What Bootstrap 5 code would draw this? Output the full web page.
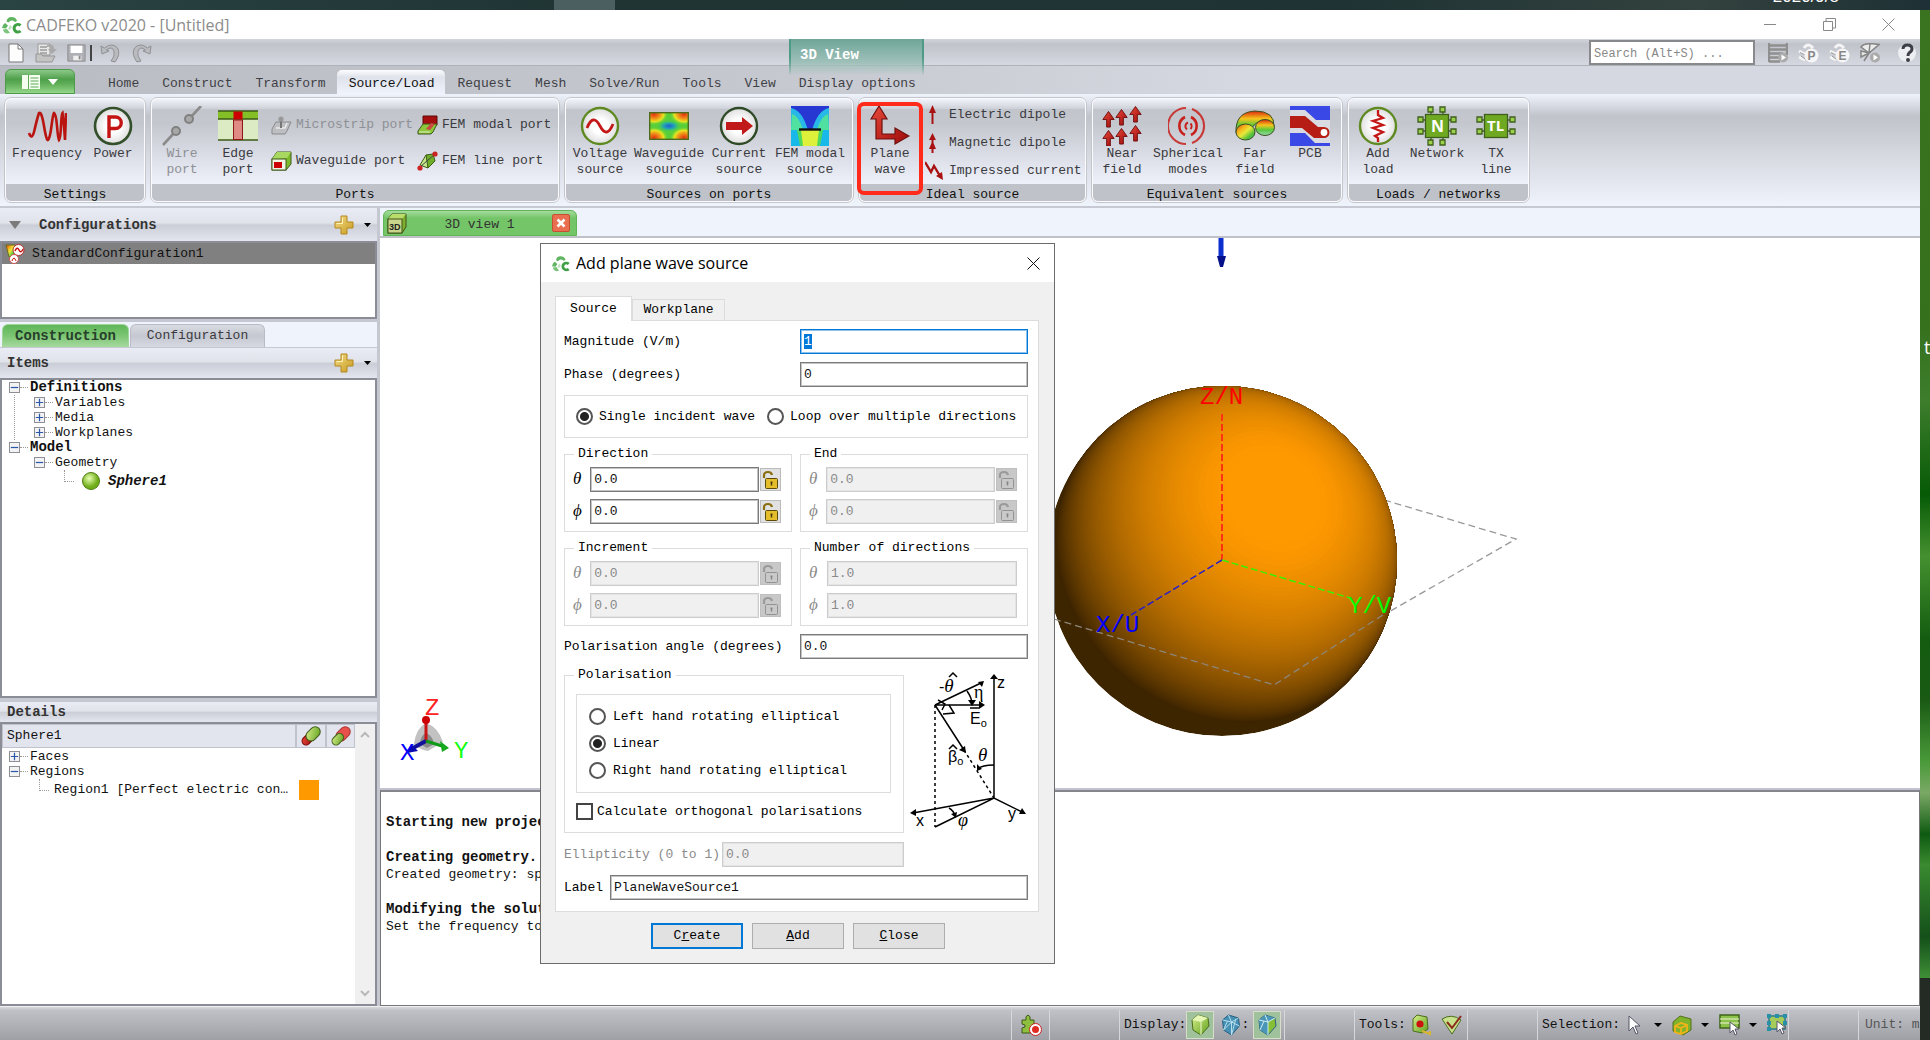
<!DOCTYPE html>
<html lang="en">
<head>
<meta charset="utf-8">
<meta name="viewport" content="width=device-width, initial-scale=1">
<title>CADFEKO v2020 - [Untitled]</title>
<link href="https://cdn.jsdelivr.net/npm/bootstrap@5.3.0/dist/css/bootstrap.min.css" rel="stylesheet">
<style>
:root{--ink:#3a3a40;--edge:#8a8d96;--pale:#eff3fc;--mid:#c0c3ca}
body{min-height:100vh;background:#2b5f1c;font-family:"Liberation Mono",monospace;font-size:13px;line-height:16px;color:#111;overflow:hidden}
svg{display:block;flex:none}
button{font-family:inherit;font-size:13px;line-height:16px;color:inherit;background:none;border:0;padding:0;border-radius:0}
.desk-top{height:10px;overflow:hidden;background:linear-gradient(90deg,#2a4343,#203434 30%,#1f3334 70%,#33423e 88%,#1e3035);color:#fff;font-family:"Liberation Sans",sans-serif;font-size:17px;padding-right:91px}
.desk-top .thumb{width:61px;margin-left:554px;background:#4c5f60}
.desk-top .date{line-height:16px;margin-top:-11px}
.desk-side{width:10px;color:#fff;overflow:hidden;padding:322px 0 0 4px;font-family:"Open Sans",sans-serif;font-size:18px;line-height:30px;background:linear-gradient(#3a7420,#35701c 30%,#3d7d2c 38%,#065a06 47%,#459030 53%,#145c10 61%,#1a5a14 67%,#4a9a3a 73%,#7aa865 76%,#0f5a12 80%,#3a8a30 83%,#14501a 90%,#3f8f36 94%,#232b24 94%)}
.ui-face{font-family:"Open Sans",sans-serif;font-size:16px}
.title-row{height:29px;background:#fff;color:#8c8c8c;padding:0 25px 0 2px}
.title-row .wctl{gap:46px}
.quick{height:27px;background:linear-gradient(#d2d5dc,#c0c3ca 20%,#d5d8e0);border-bottom:1px solid #afb2b9;padding:1px 4px 0 8px}
.quick .bar{width:2px;height:16px;background:#444}
.ctx{width:135px;height:36px;padding:7px 9px;background:linear-gradient(#6fa698,#9fc0ba 65%,rgba(195,200,206,0));border-left:2px solid #4d9a86;border-right:2px solid #4d9a86;border-image:linear-gradient(#4d9a86 50%,rgba(77,154,134,0)) 1;color:#fff;font-weight:bold;font-size:14px;line-height:18px;left:789px;top:0}
.search{width:166px;height:25px;border:2px solid #88898c;border-radius:0;font-size:12px;padding:2px 3px 0;background:#fff;color:#777}
.search::placeholder{color:#888}
.tab-row{height:28px;background:linear-gradient(90deg,#b9bcc2,#c5c8cf 40%,#d5d8e0 65%);padding-left:5px}
.app-btn{width:70px;height:25px;background:linear-gradient(#8cc98a,#4f9f4b 40%,#5fae57 60%,#94d68a);border:1px solid #4f9a4a;border-radius:6px 6px 0 0}
.rib-tab{height:24px;padding:3px 11px 0 12px;color:#3f4046}
.rib-tab.active{background:linear-gradient(#fdfdff,#dfe2ea 30%,#eff3fc);border-radius:5px 5px 0 0;color:#111}
.ribbon{height:114px;padding:3px 4px;gap:4px;background:linear-gradient(#eff3fc,#c0c3ca 20%,#d3d6dd 50%,#eff3fc);border-bottom:2px solid #c6c9d1}
.rgroup{border:2px solid #fbfbfe;outline:1px solid #c4c6cd;outline-offset:-1px;border-radius:7px;background:linear-gradient(#f2f4fb,#cdd0d8 10px,#c2c5cc 10px,#c4c7ce 25px,#eff2fb 86px)}
.rgroup .rbody{height:85px}
.rgroup .rfoot{height:17px;line-height:21px;background:#bfc2c8;text-align:center;color:#111;border-radius:0 0 5px 5px}
.big{color:var(--ink);white-space:nowrap;padding-top:7px}
.big svg{width:40px;height:40px}
.sm-btn{color:var(--ink);gap:4px;height:28px;white-space:nowrap}
.lite{color:#8e9096}
.plane{outline:4px solid #ff2a1a;outline-offset:-1px;border-radius:4px;margin-top:6px;padding:1px 0 14px;z-index:1}
.left-dock{width:380px;background:#c5c8d1;border-right:3px solid #c5c8d1}
.dock-head{height:31px;background:linear-gradient(#e9ecf5,#e0e3ea 45%,#cbced6 52%,#e3e6ee);color:#333;font-weight:bold;font-size:14px}
.pane{background:#fff;border:2px solid var(--edge)}
.cfg-row{height:21px;background:#808080;color:#111;padding-left:3px;gap:7px}
.dk-tab{height:23px;border:1px solid #b9bcc6;border-bottom:0;border-radius:6px 6px 0 0;background:linear-gradient(#d9dbe2,#c5c8d0 50%,#d6d9e1);color:#3a3a40}
.dk-tab.on{background:linear-gradient(#5fb658,#7cc673 50%,#a6d9a0);border-color:#9fd49a;font-weight:bold;color:#26402a;font-size:14px}
.tree,.tree ul{list-style:none;margin:0;padding:0}
.tree .node{height:15px;line-height:15px;white-space:nowrap}
.tree .tg{width:11px;height:11px;border:1px solid #8d8f94;background:#f3f3f3;color:#2b57a8;padding:0}
.tree .tg svg{width:9px;height:9px}
.stub{width:8px;border-top:1px dotted #999;margin-right:2px}
.kids{margin-left:5px !important;border-left:1px dotted #999}
.elbow{width:10px;height:12px;border-left:1px dotted #999;border-bottom:1px dotted #999;align-self:flex-start}
.cell{height:24px;background:#e2e4ee;border:1px solid #c1c3cc}
.sbar{width:20px;background:#f0f0f0;padding:7px 0}
.tab3d{width:194px;height:26px;background:linear-gradient(#a5dc9e,#74c468 30%);border:1px solid #62b556;border-radius:6px 6px 0 0;color:#333;padding:0 6px 0 3px}
.tab3d .shut{width:18px;height:18px;background:#ea6f50;border:1px solid #c94f33;border-radius:2px}
.log-pane{height:216px;background:#fff;border:1px solid #777;border-top:2px solid #85868c;padding:21px 5px}
.log-pane p{margin:0;height:17px;line-height:17px;white-space:pre}
.log-pane h6{margin:0;height:18px;font-size:14px;line-height:18px;font-weight:bold;white-space:pre}
.view-edge{height:2px;background:#c1c3d0}
.status{height:34px;background:linear-gradient(#d8dade,#bfc1c7 10%,#9fa0a6);border-top:1px solid #eee;color:#111}
.sec{border-left:1px solid #d6d7da;height:30px}
.sec.shut-r{border-right:1px solid #d6d7da}
.st-on{width:28px;height:28px;background:#9fc19c;border:1px solid #d9dcc8}
.dlg{left:540px;top:233px;width:515px;background:#f0f0f0;border:1px solid #6b6b6b;color:#000;z-index:5}
.dlg-title{height:38px;background:#fff;padding:0 14px 0 11px;gap:6px}
.dlg-body{padding:14px 15px 14px 14px}
.dtab{border:1px solid #dcdcdc;border-bottom:0;background:#f0f0f0;height:21px;width:93px}
.dtab.on{background:#fff;height:25px;width:77px;margin-bottom:-1px;z-index:1;position:relative}
.dpanel{background:#fff;border:1px solid #dcdcdc;padding:8px 10px 11px 8px}
.fk{height:25px;border:1px solid #7a7a7a;outline:1px solid #c4c4c4;outline-offset:-2px;border-radius:0;padding:0 3px;font-size:13px;line-height:16px;color:#111;background:#fff;min-width:0}
.fk:focus{box-shadow:none;border-color:#0078d7;outline:1px solid #8cc1ec;outline-offset:-2px;color:#111}
.fk:disabled{background:#f0f0f0;border-color:#ccc;outline-color:#e4e4e4;color:#8a8a8a}
.fk::selection{background:#0078d7;color:#fff}
.half{width:228px}
.boxed{border:1px solid #dcdcdc}
.grp{border:1px solid #dcdcdc;min-width:0;padding:5px 10px 7px 8px;margin:0}
.grp legend{float:none;width:auto;margin:0 0 0 1px;padding:0 4px;font-size:13px;line-height:16px}
.grp label.sym{width:18px;font-family:"Liberation Serif",serif;font-style:italic;font-size:17px;line-height:24px}
.lockb{width:22px;height:23px;margin:1px 0 1px 1px;background:#e1e1e1;border:1px solid #bbb}
.lockb:disabled{background:#c8c8c8;color:#8f8f8f;border-color:#bfbfbf}
.rb{appearance:none;width:17px;height:17px;border:2px solid #555;border-radius:50%;margin:0;background:#fff;flex:none}
.rb:checked{background:radial-gradient(#222 0 4px,#fff 5px)}
.cb{appearance:none;width:17px;height:17px;border:2px solid #444;margin:0;background:#fff;flex:none}
.dim{color:#8a8a8a}
.dbtn{width:92px;height:26px;background:#e1e1e1;border:1px solid #adadad}
.dbtn.prime{border:2px solid #0078d7}
.gap7{gap:7px}.gap8{gap:8px}
.viewport3d{background:#fff;min-height:0;overflow:hidden}
</style>
<script src="https://cdn.jsdelivr.net/npm/bootstrap@5.3.0/dist/js/bootstrap.bundle.min.js"></script>
</head>
<body class="d-flex flex-column vh-100">
<svg width="0" height="0" class="position-absolute" aria-hidden="true">
 <defs>
  <linearGradient id="gRed" x1="0" y1="0" x2="1" y2="1"><stop offset="0" stop-color="#e84a3a"/><stop offset="1" stop-color="#9c0a0a"/></linearGradient>
  <linearGradient id="gGrn" x1="0" y1="0" x2="1" y2="1"><stop offset="0" stop-color="#d8ef8c"/><stop offset="1" stop-color="#5fa01c"/></linearGradient>
  <linearGradient id="gGold" x1="0" y1="0" x2="1" y2="1"><stop offset="0" stop-color="#f3dc8a"/><stop offset="1" stop-color="#c79a1d"/></linearGradient>
  <radialGradient id="gDisc"><stop offset="0.4" stop-color="#fff"/><stop offset="1" stop-color="#dedede"/></radialGradient>
  <radialGradient id="gBall" cx=".4" cy=".35"><stop offset="0" stop-color="#e8ffb0"/><stop offset="1" stop-color="#6fae1a"/></radialGradient>
  <radialGradient id="gHot"><stop offset="0" stop-color="#e03010"/><stop offset=".4" stop-color="#f08a18"/><stop offset=".7" stop-color="#e8e420"/><stop offset="1" stop-color="#5fd63a" stop-opacity="0"/></radialGradient>
  <radialGradient id="gCold"><stop offset="0" stop-color="#1f5fd0"/><stop offset=".5" stop-color="#24a8b0"/><stop offset="1" stop-color="#4fd040" stop-opacity="0"/></radialGradient>
  <linearGradient id="gRain" x1="0" y1="0" x2="1" y2="1"><stop offset="0" stop-color="#d83a12"/><stop offset=".3" stop-color="#f4b41a"/><stop offset=".5" stop-color="#e8e83a"/><stop offset=".75" stop-color="#4fc03a"/><stop offset="1" stop-color="#58b8a8"/></linearGradient>
  <linearGradient id="gLobe" x1="0" y1="0" x2="0" y2="1"><stop offset="0" stop-color="#d8260e"/><stop offset=".35" stop-color="#f6c51c"/><stop offset=".65" stop-color="#58c83a"/><stop offset="1" stop-color="#9ad8b0"/></linearGradient>
  <symbol id="logo" viewBox="0 0 20 18"><path d="M4.500 5.500Q5 1 9.500 1T15 5L13 6Q9.500 3 6.500 6.500Z" fill="#5fb561"/><path d="M3 7l3 2.500L4 12.500L0 12Q1 8 3 7Z" fill="#5fb561"/><path d="M1 13.500l4-.500 3 4-3 .500Q1.500 17 1 13.500Z" fill="#7cc47c"/><path d="M8 9l2 2-2 3-2-1z" fill="#bfe2bf"/><path d="M18.500 9.500A3.800 3.800 0 1 0 18.500 15" fill="none" stroke="#3fa045" stroke-width="3"/></symbol>
  <symbol id="plus" viewBox="0 0 20 20"><path d="M7 1h6v6h6v6h-6v6H7v-6H1V7h6z" fill="url(#gGold)" stroke="#b5891c"/><path d="M8.500 2.500v6h-6" stroke="#fff3b8" fill="none"/></symbol>
  <symbol id="lock" viewBox="0 0 18 20"><path d="M3 8V5.500Q3 2 7 2Q10.500 2 11 5" fill="none" stroke="#8a6d10" stroke-width="2.200"/><rect x="4.500" y="8.500" width="12" height="10" rx="1" fill="#e3bd2c" stroke="#5d4a0b"/><path d="M10.500 11.500v4M9.500 12.500h2" stroke="#4a3908" stroke-width="1.400"/></symbol>
  <symbol id="lockoff" viewBox="0 0 18 20"><path d="M3 8V5.500Q3 2 7 2Q10.500 2 11 5" fill="none" stroke="#9a9a9a" stroke-width="2.200"/><rect x="4.500" y="8.500" width="12" height="10" rx="1" fill="#c9c9c9" stroke="#929292"/><path d="M10.500 11.500v4M9.500 12.500h2" stroke="#858585" stroke-width="1.400"/></symbol>
  <symbol id="upar" viewBox="0 0 13 18"><path d="M6.500 .500L12.500 9H8.500v8h-4V9H.500z" fill="url(#gRed)" stroke="#701010"/></symbol>
  <symbol id="cubeg" viewBox="0 0 20 22"><path d="M2 6L8 1L18 4L19 12L11 21L3 16Z" fill="url(#gGrn)" stroke="#4c6d1d"/><path d="M2 6L8 1L18 4L11 8Z" fill="#e6f6b4"/><path d="M11 8L11 21" fill="none" stroke="#f1fad2"/></symbol>
  <symbol id="pin" viewBox="0 0 11 11"><path d="M1 5.500h9M5.500 1v9" stroke="#2b57a8" stroke-width="1.500"/></symbol>
  <symbol id="minus" viewBox="0 0 11 11"><path d="M1 5.500h9" stroke="#2b57a8" stroke-width="1.500"/></symbol>
 </defs>
</svg>

<div class="desk-top d-flex flex-shrink-0 justify-content-between"><span class="thumb"></span><span class="date">2020/9/8</span></div>
<div class="d-flex flex-grow-1" style="min-height:0">
<main class="d-flex flex-column flex-grow-1 position-relative" style="min-width:0">
 <header class="title-row d-flex align-items-center flex-shrink-0 ui-face">
  <svg width="20" height="18"><use href="#logo"/></svg><span class="ms-1">CADFEKO v2020 - [Untitled]</span>
  <div class="wctl d-flex ms-auto">
   <button aria-label="Minimise"><svg width="13" height="13"><path d="M0 6.500h12" stroke="#888"/></svg></button>
   <button aria-label="Restore"><svg width="13" height="13"><path d="M.500 3.500h9v9h-9zM3 3V.500h9.500V10H10" fill="none" stroke="#888"/></svg></button>
   <button aria-label="Close window"><svg width="13" height="13"><path d="M.500.500l12 12m0-12l-12 12" stroke="#888"/></svg></button>
  </div>
 </header>

 <div class="position-relative flex-shrink-0">
 <div class="quick d-flex align-items-center">
  <button aria-label="New"><svg width="16" height="20"><path d="M1 1h9l5 5v13H1z" fill="#fdfdfd" stroke="#777"/><path d="M10 1v5h5" fill="none" stroke="#777"/></svg></button>
  <button style="margin-left:10px" aria-label="Open"><svg width="24" height="20" viewBox="0 0 24 20"><path d="M4 1h12v11H4z" fill="#e8e8e8" stroke="#999"/><path d="M6 4h7M6 7h7M6 10h7" stroke="#999" stroke-width="1.500"/><path d="M13 2q7-2 7 4h3l-5 5-4-5h3q0-3-4-2z" fill="#a9a9a9"/><path d="M2 11h5l2 2h12l-3 6H2z" fill="#c4c4c4" stroke="#959595"/></svg></button>
  <button class="ms-2" aria-label="Save"><svg width="20" height="20" viewBox="0 0 22 20"><path d="M2 1h19v18H2z" fill="#aeb0b5" stroke="#8b8b8b"/><path d="M5 2h13v8H5z" fill="#fff"/><path d="M8 13h9v5H8z" fill="#eee"/><path d="M14 13h2v4h-2z" fill="#888"/></svg></button>
  <span class="bar ms-1"></span>
  <button class="ms-2" aria-label="Undo"><svg width="20" height="20" viewBox="0 0 20 20"><path d="M1 3l1 8 7-3-2.500-1Q12 2.500 14 8q1.500 5-3 10l4 1Q21 11 17.500 5 12-1 4.500 5z" fill="#b9bbbf" stroke="#8f9195"/></svg></button>
  <button class="ms-2 ps-1" aria-label="Redo"><svg width="20" height="20" viewBox="0 0 20 20"><path transform="translate(20)scale(-1 1)" d="M1 3l1 8 7-3-2.500-1Q12 2.500 14 8q1.500 5-3 10l4 1Q21 11 17.500 5 12-1 4.500 5z" fill="#b9bbbf" stroke="#8f9195"/></svg></button>
  <input class="search ms-auto" type="text" placeholder="Search (Alt+S) ..." aria-label="Search">
  <div class="d-flex" style="margin-left:13px;gap:10px">
   <button aria-label="Run solver"><svg width="20" height="20" viewBox="0 0 20 20"><path d="M1 0v19M19 0v12M1 2.500h18M1 6.500h18M1 10.500h14M1 14.500h12M1 18.500h11" stroke="#8f8f8f" stroke-width="2.400"/><circle cx="15" cy="14.500" r="5" fill="#aaa"/><path d="M13.500 11.500l4.500 3-4.500 3z" fill="#fff"/></svg></button>
   <button aria-label="Postfeko"><svg width="21" height="20" viewBox="0 0 21 20"><path d="M6 5Q10-1 15 5M1 8l6 3M1 14l6 3" stroke="#f4f4f4" stroke-width="3" fill="none"/><path d="M2 9.500l5 2.500M3 13l4 3" stroke="#999"/><circle cx="13.500" cy="12.500" r="7" fill="#f6f6f6"/><text x="9.500" y="17" font-family="Liberation Sans,sans-serif" font-weight="bold" font-size="12" fill="#888">P</text></svg></button>
   <button aria-label="Editfeko"><svg width="21" height="20" viewBox="0 0 21 20"><path d="M6 5Q10-1 15 5M1 8l6 3M1 14l6 3" stroke="#f4f4f4" stroke-width="3" fill="none"/><path d="M2 9.500l5 2.500M3 13l4 3" stroke="#999"/><circle cx="13.500" cy="12.500" r="7" fill="#f6f6f6"/><text x="9.500" y="17" font-family="Liberation Sans,sans-serif" font-weight="bold" font-size="12" fill="#888">E</text></svg></button>
   <button aria-label="Optimise"><svg width="20" height="20" viewBox="0 0 20 20"><path d="M9 10L1 4Q3 1 10 .500L19 1.500ZM9 10L1 8v6zM9 10L4 18M10 .500L9 10M1 4l8 6" fill="#ececec" stroke="#858585" stroke-width="1.500"/><circle cx="15" cy="14.500" r="5" fill="#aaa"/><path d="M13.500 11.500l4.500 3-4.500 3z" fill="#fff"/></svg></button>
   <button class="ms-2" aria-label="Help"><svg width="18" height="20" viewBox="0 0 18 20"><circle cx="9" cy="10" r="9" fill="#eceef2"/><path d="M5 6Q5 2 9.500 2T14 6Q14 8 11 10Q10 11 10 13" fill="none" stroke="#3e4048" stroke-width="3"/><circle cx="10" cy="17" r="2" fill="#3e4048"/></svg></button>
  </div>
 </div>
 <nav class="tab-row d-flex align-items-end" aria-label="Ribbon tabs">
  <button class="app-btn d-flex align-items-center justify-content-center gap-2" aria-label="Application menu"><svg width="18" height="14"><path d="M0 0h18v14H0z" fill="#f4fff0"/><path d="M6.500 0v14M8.500 3h8M8.500 6h8M8.500 9h8M8.500 12h8" stroke="#5fa85a"/></svg><svg width="10" height="6"><path d="M0 0h10L5 6z" fill="#fff"/></svg></button>
  <button class="rib-tab" style="margin-left:21px">Home</button><button class="rib-tab">Construct</button><button class="rib-tab">Transform</button><button class="rib-tab active">Source/Load</button><button class="rib-tab">Request</button><button class="rib-tab">Mesh</button><button class="rib-tab">Solve/Run</button><button class="rib-tab">Tools</button><button class="rib-tab">View</button><button class="rib-tab">Display options</button>
 </nav>
 <div class="ctx position-absolute">3D View</div>
 </div>

 <section class="ribbon d-flex flex-shrink-0" aria-label="Source/Load">
  <div class="rgroup" style="width:142px">
   <div class="rbody d-flex align-items-start">
    <button class="big ms-1" style="width:74px"><svg class="mx-auto" viewBox="0 0 40 40"><path d="M2 27Q5 35 7.500 24T12 7Q14.500 5 17 20T21 34Q23 32 24.500 20T27 7Q29 8 30 20T32 34Q33.500 32 34 20T35.500 7L37 20L38 34L39 7" fill="none" stroke="#b9140f" stroke-width="2.600"/></svg>Frequency</button>
    <button class="big" style="width:58px"><svg class="mx-auto" viewBox="0 0 40 40"><circle cx="20" cy="20" r="18" fill="url(#gDisc)" stroke="#33502a" stroke-width="2.600"/><path d="M16 32V11h6.500a5.500 5.500 0 0 1 0 11.500H16" fill="none" stroke="#c41414" stroke-width="3.400"/></svg>Power</button>
   </div><div class="rfoot">Settings</div>
  </div>
  <div class="rgroup" style="width:410px">
   <div class="rbody d-flex align-items-start">
    <button class="big lite" style="width:60px"><svg class="mx-auto" viewBox="0 0 40 40"><path d="M1 39L13 26M28 12L39 0" stroke="#8b8b8b" stroke-width="2.600"/><circle cx="14" cy="25" r="4" fill="#a8a8a8" stroke="#808080" stroke-width="2"/><circle cx="27" cy="13" r="4" fill="#a8a8a8" stroke="#808080" stroke-width="2"/></svg>Wire<br>port</button>
    <button class="big" style="width:52px"><svg class="mx-auto" viewBox="0 0 40 40"><rect x="0" y="5" width="40" height="29" fill="#dcebc4"/><rect x="0" y="5" width="40" height="8" fill="#84bf28"/><path d="M0 5h40M0 13h40M0 34h40" stroke="#3d5a18" stroke-width="1.400"/><rect x="15.500" y="5.500" width="9" height="8" fill="#c00"/><rect x="15.500" y="14" width="9" height="19.500" fill="#e08a86" stroke="#8d1717"/></svg>Edge<br>port</button>
    <div class="d-flex flex-column gap8" style="padding:12px 0 0 7px;width:153px">
     <button class="sm-btn lite d-flex align-items-center"><svg width="21" height="20" viewBox="0 0 21 20"><path d="M1 14l4-7h15l-4 9-2 3H1z" fill="#bcbec2" stroke="#8b8b8b"/><path d="M5 13h9l2-5" fill="none" stroke="#ececec" stroke-width="1.500"/><path d="M10 13V5" stroke="#777" stroke-width="2"/><circle cx="10" cy="4" r="2.600" fill="#999"/></svg>Microstrip port</button>
     <button class="sm-btn d-flex align-items-center"><svg width="21" height="20" viewBox="0 0 21 20"><path d="M1 8l5-7h14v12l-5 6H1z" fill="#7cba2c" stroke="#3e5a18"/><path d="M1 8l5-7h14l-4 6z" fill="#a8d860"/><rect x="1" y="8" width="14" height="11" fill="#f2f5e6" stroke="#3e5a18"/><rect x="3" y="11" width="8" height="6" fill="#c00"/></svg>Waveguide port</button>
    </div>
    <div class="d-flex flex-column gap8" style="padding-top:12px">
     <button class="sm-btn d-flex align-items-center"><svg width="21" height="20" viewBox="0 0 21 20"><path d="M6 1h14v9H6z" fill="#a40e0e" stroke="#5f0808"/><path d="M1 16l5-7h14l-4 8-2 2H1z" fill="#8cc63a" stroke="#3e5a18"/><path d="M9 14l5-6 4 1-5 6z" fill="#c94a40"/><path d="M2 17h11" stroke="#e8f3c8"/></svg>FEM modal port</button>
     <button class="sm-btn d-flex align-items-center"><svg width="21" height="20" viewBox="0 0 21 20"><path d="M3 14L9 4l4 3-2 10z" fill="#c4e88a" stroke="#3e5a18"/><path d="M9 4l7-1 2 7-7 7z" fill="#6fae28" stroke="#3e5a18"/><path d="M3 16L18 3" stroke="#444"/><circle cx="3" cy="17" r="2.600" fill="#c22"/><circle cx="18" cy="3" r="2.600" fill="#c22"/></svg>FEM line port</button>
    </div>
   </div><div class="rfoot">Ports</div>
  </div>
  <div class="rgroup" style="width:290px">
   <div class="rbody d-flex align-items-start">
    <button class="big" style="width:68px"><svg class="mx-auto" viewBox="0 0 40 40"><circle cx="20" cy="20" r="18" fill="url(#gDisc)" stroke="#5f8a22" stroke-width="2.400"/><path d="M7 22Q13 7 20 20T33 18" fill="none" stroke="#c41818" stroke-width="2.800"/></svg>Voltage<br>source</button>
    <button class="big" style="width:70px"><svg class="mx-auto" viewBox="0 6 40 28" style="height:28px;margin:6px 0"><rect width="40" height="40" fill="#58cf3a"/><ellipse cx="5" cy="8" rx="14" ry="11" fill="url(#gHot)"/><ellipse cx="35" cy="8" rx="14" ry="11" fill="url(#gHot)"/><ellipse cx="5" cy="32" rx="14" ry="11" fill="url(#gHot)"/><ellipse cx="35" cy="32" rx="14" ry="11" fill="url(#gHot)"/><ellipse cx="20" cy="20" rx="12" ry="6" fill="url(#gCold)"/><rect x=".700" y="6.700" width="38.600" height="26.600" fill="none" stroke="#4e6b1c" stroke-width="1.400"/></svg>Waveguide<br>source</button>
    <button class="big" style="width:70px"><svg class="mx-auto" viewBox="0 0 40 40"><circle cx="20" cy="20" r="18" fill="url(#gDisc)" stroke="#2f4a26" stroke-width="2.400"/><path d="M7 16h16v-5l11 9-11 9v-5H7z" fill="#c11a1a"/></svg>Current<br>source</button>
    <button class="big" style="width:72px"><svg class="mx-auto" viewBox="0 0 40 40"><rect x="1" width="38" height="40" fill="#2637d2"/><path d="M1 2Q12 4 18 24H1zM39 2Q28 4 22 24h17z" fill="#28b8e8"/><path d="M2 8Q9 10 13 24H1zM38 8Q31 10 27 24h12z" fill="#50e0a0"/><path d="M1 24h38v16H1z" fill="#18b8e8"/><path d="M7 24h26l-3 16H10z" fill="#4fd860"/><path d="M11 24h18l-2 16H13z" fill="#dff03a"/><path d="M9 23.500h22" stroke="#111" stroke-width="2.400"/></svg>FEM modal<br>source</button>
   </div><div class="rfoot">Sources on ports</div>
  </div>
  <div class="rgroup" style="width:229px">
   <div class="rbody d-flex align-items-start">
    <button class="big plane position-relative" style="width:60px"><svg class="mx-auto" viewBox="0 0 40 40"><path d="M9 0l8 13h-5v15h13v-6l14 8-14 8v-5H6V13H1z" fill="url(#gRed)" stroke="#6e1010" stroke-width="1.200"/></svg>Plane<br>wave</button>
    <div class="d-flex flex-column" style="padding:2px 0 0 5px">
     <button class="sm-btn d-flex align-items-center"><svg width="20" height="20" viewBox="0 0 20 20"><path d="M7.500 0L11 8H8.500v11h-2V8H4z" fill="#a81212"/></svg>Electric dipole</button>
     <button class="sm-btn d-flex align-items-center"><svg width="20" height="20" viewBox="0 0 20 20"><path d="M7.500 0L11 7H8.500v3L11 16H8.500v4h-2v-4H4l2.500-6V7H4z" fill="#a81212"/></svg>Magnetic dipole</button>
     <button class="sm-btn d-flex align-items-center"><svg width="20" height="20" viewBox="0 0 20 20"><path d="M0 1l6 10 3-6 6 10" fill="none" stroke="#a81212" stroke-width="2.400"/><path d="M18 19l-1-8-6 4z" fill="#a81212"/></svg>Impressed current</button>
    </div>
   </div><div class="rfoot">Ideal source</div>
  </div>
  <div class="rgroup" style="width:252px">
   <div class="rbody d-flex align-items-start">
    <button class="big" style="width:58px"><svg class="mx-auto" viewBox="0 0 40 40"><g><use href="#upar" x="0" y="5" width="13" height="17"/><use href="#upar" x="13" y="3" width="13" height="17"/><use href="#upar" x="27" y="0" width="13" height="17"/><use href="#upar" x="0" y="24" width="13" height="17"/><use href="#upar" x="13" y="22" width="13" height="17"/><use href="#upar" x="27" y="19" width="13" height="17"/></g></svg>Near<br>field</button>
    <button class="big" style="width:74px"><svg class="mx-auto" viewBox="0 0 40 40"><g fill="none" stroke="#c8201c"><path d="M18 2A18 18 0 0 0 18 38" stroke-width="2" opacity=".85"/><path d="M24 3A18 18 0 0 1 24 37" stroke-width="2" opacity=".85"/><path d="M17 11A10 10 0 0 0 17 29M23 11A10 10 0 0 1 23 29" stroke-width="2.600"/><path d="M20 16.500A4 4 0 0 0 19 23.500M22.500 17.500A4 4 0 0 1 22.500 23" stroke-width="2"/></g></svg>Spherical<br>modes</button>
    <button class="big" style="width:60px"><svg class="mx-auto" viewBox="0 0 40 40"><path d="M1 27Q0 6 20 5Q40 5 39 21L28 16Q21 15 17 22Z" fill="url(#gLobe)" stroke="#3c4f22"/><ellipse cx="10.500" cy="26" rx="9.500" ry="8" fill="url(#gRain)" stroke="#3c4f22"/><ellipse cx="30" cy="21.500" rx="9.500" ry="8" fill="url(#gLobe)" stroke="#3c4f22"/></svg>Far<br>field</button>
    <button class="big" style="width:50px"><svg class="mx-auto" viewBox="0 0 40 40"><path d="M0 0h40v40H0z" fill="#d9dae2"/><path d="M0 0h40v14H26L15 4H0zM0 27h15l10 10h15v3H0z" fill="#3a48e6"/><path d="M0 10h15l13 11h6a5.500 5.500 0 0 1 0 11H24L12 22H0z" fill="#b51d15"/><circle cx="34" cy="26.500" r="3.400" fill="#fff"/></svg>PCB</button>
   </div><div class="rfoot">Equivalent sources</div>
  </div>
  <div class="rgroup" style="width:183px">
   <div class="rbody d-flex align-items-start">
    <button class="big" style="width:58px"><svg class="mx-auto" viewBox="0 0 40 40"><circle cx="20" cy="20" r="18" fill="url(#gDisc)" stroke="#5f8a22" stroke-width="2.400"/><path d="M20 4v5l5 3-10 3 10 4-10 3 10 4-8 4 3 2v4" fill="none" stroke="#c41818" stroke-width="2.300"/></svg>Add<br>load</button>
    <button class="big" style="width:60px"><svg class="mx-auto" viewBox="0 0 40 40"><g fill="#9ad04a" stroke="#3f5f1d" stroke-width="1.300"><path d="M14 6v4M26 6v4M14 30v5M26 30v5M5 14h4M5 25h4M31 14h4M31 25h4"/><path d="M11 1h5v5h-5zM23 1h5v5h-5zM11 34h5v5h-5zM23 34h5v5h-5zM1 11h5v5H1zM1 23h5v5H1zM34 11h5v5h-5zM34 23h5v5h-5z"/><rect x="8.500" y="8.500" width="23" height="23" fill="#6fa821"/></g><text x="14" y="26" font-family="Open Sans,sans-serif" font-weight="bold" font-size="16" fill="#fff">N</text></svg>Network</button>
    <button class="big" style="width:58px"><svg class="mx-auto" viewBox="0 0 40 40"><g fill="#9ad04a" stroke="#3f5f1d" stroke-width="1.300"><path d="M5 14h4M5 25h4M31 14h4M31 25h4"/><path d="M1 11h5v5H1zM1 23h5v5H1zM34 11h5v5h-5zM34 23h5v5h-5z"/><rect x="8.500" y="8.500" width="23" height="23" fill="#6fa821"/></g><text x="11" y="25" font-family="Open Sans,sans-serif" font-weight="bold" font-size="15" fill="#fff">TL</text></svg>TX<br>line</button>
   </div><div class="rfoot">Loads / networks</div>
  </div>
 </section>

 <div class="d-flex flex-grow-1" style="min-height:0">
  <aside class="left-dock d-flex flex-column flex-shrink-0">
   <div class="dock-head d-flex align-items-center" style="height:33px;padding:0 6px 0 9px"><svg width="12" height="8"><path d="M0 0h12L6 8z" fill="#7b7b7b"/></svg><span style="margin-left:18px">Configurations</span><button class="ms-auto" aria-label="Add configuration"><svg width="20" height="20"><use href="#plus"/></svg></button><button aria-label="Configuration menu" style="margin-left:10px"><svg width="7" height="4"><path d="M0 0h7L3.500 4z"/></svg></button></div>
   <div class="pane" style="height:78px"><div class="cfg-row d-flex align-items-center"><svg width="20" height="20" viewBox="0 0 20 20"><path d="M1 1h9v11l-6 1z" fill="url(#gRain)" stroke="#6a6a20"/><circle cx="13.500" cy="6" r="5.500" fill="#fff" stroke="#b33"/><path d="M10 7q2-5 4-1t4-1" fill="none" stroke="#c11" stroke-width="1.500"/><circle cx="9" cy="15" r="4.500" fill="#fff" stroke="#c55"/><path d="M7 17q2-6 4 0" fill="none" stroke="#c11"/></svg>StandardConfiguration1</div></div>
   <div class="d-flex align-items-end" style="height:28px;padding-left:2px;background:#eff3fc;border-top:3px solid #c5c8d1"><button class="dk-tab on" style="width:127px">Construction</button><button class="dk-tab" style="width:135px;margin-left:1px">Configuration</button></div>
   <div class="dock-head d-flex align-items-center" style="padding:0 6px 0 7px;border-top:1px solid #c5c8d1"><span>Items</span><button class="ms-auto" aria-label="Add item"><svg width="20" height="20"><use href="#plus"/></svg></button><button aria-label="Item menu" style="margin-left:10px"><svg width="7" height="4"><path d="M0 0h7L3.500 4z"/></svg></button></div>
   <div class="pane" style="height:320px;padding-left:7px">
    <ul class="tree">
     <li><div class="node d-flex align-items-center fw-bold" style="font-size:14px"><button class="tg" aria-label="Collapse"><svg><use href="#minus" width="9" height="9"/></svg></button><span class="stub"></span>Definitions</div>
      <ul class="kids" style="padding-left:19px">
       <li class="node d-flex align-items-center"><button class="tg" aria-label="Expand"><svg><use href="#pin" width="9" height="9"/></svg></button><span class="stub"></span>Variables</li>
       <li class="node d-flex align-items-center"><button class="tg" aria-label="Expand"><svg><use href="#pin" width="9" height="9"/></svg></button><span class="stub"></span>Media</li>
       <li class="node d-flex align-items-center"><button class="tg" aria-label="Expand"><svg><use href="#pin" width="9" height="9"/></svg></button><span class="stub"></span>Workplanes</li>
      </ul></li>
     <li><div class="node d-flex align-items-center fw-bold" style="font-size:14px"><button class="tg" aria-label="Collapse"><svg><use href="#minus" width="9" height="9"/></svg></button><span class="stub"></span>Model</div>
      <ul style="padding-left:25px">
       <li><div class="node d-flex align-items-center"><button class="tg" aria-label="Collapse"><svg><use href="#minus" width="9" height="9"/></svg></button><span class="stub"></span>Geometry</div>
        <ul style="padding-left:30px"><li class="d-flex align-items-center fw-bold fst-italic gap8" style="height:22px;font-size:14px"><span class="elbow"></span><svg width="18" height="18"><circle cx="9" cy="9" r="8.500" fill="url(#gBall)" stroke="#4f7d14"/></svg>Sphere1</li></ul></li>
      </ul></li>
    </ul>
   </div>
   <div class="dock-head d-flex align-items-center" style="height:24px;border-top:4px solid #c5c8d1;padding-left:7px">Details</div>
   <div class="pane d-flex flex-grow-1" style="min-height:0">
    <div class="flex-grow-1">
     <div class="d-flex"><div class="cell flex-grow-1 d-flex align-items-center ps-1">Sphere1</div>
      <button class="cell d-flex align-items-center justify-content-center" style="width:30px" aria-label="Show front"><svg width="22" height="22" viewBox="0 0 22 22"><g transform="rotate(-45 11 11)"><rect x="0" y="7" width="12" height="8" rx="4" fill="url(#gRed)" stroke="#700"/><rect x="6" y="6" width="16" height="10" rx="5" fill="url(#gGrn)" stroke="#3e5a18"/></g></svg></button>
      <button class="cell d-flex align-items-center justify-content-center" style="width:29px" aria-label="Show back"><svg width="22" height="22" viewBox="0 0 22 22"><g transform="rotate(-45 11 11)"><rect x="6" y="6" width="16" height="10" rx="5" fill="#e8504a" stroke="#a33"/><rect x="0" y="7" width="13" height="8" rx="4" fill="url(#gGrn)" stroke="#3e5a18"/></g></svg></button></div>
     <ul class="tree" style="padding:1px 0 0 7px">
      <li class="node d-flex align-items-center"><button class="tg" aria-label="Expand"><svg><use href="#pin" width="9" height="9"/></svg></button><span class="stub"></span>Faces</li>
      <li><div class="node d-flex align-items-center"><button class="tg" aria-label="Collapse"><svg><use href="#minus" width="9" height="9"/></svg></button><span class="stub"></span>Regions</div>
       <ul style="padding-left:30px"><li class="d-flex align-items-center" style="height:22px"><span class="elbow"></span><span style="margin-left:5px">Region1 [Perfect electric con…</span><span class="ms-auto" style="width:20px;height:20px;background:#ff9900;margin-right:36px"></span></li></ul></li>
     </ul>
    </div>
    <div class="sbar d-flex flex-column justify-content-between align-items-center"><svg width="10" height="7"><path d="M1 6l4-4 4 4" fill="none" stroke="#b9b9b9" stroke-width="2"/></svg><svg width="10" height="7"><path d="M1 1l4 4 4-4" fill="none" stroke="#b9b9b9" stroke-width="2"/></svg></div>
   </div>
  </aside>

  <section class="d-flex flex-column flex-grow-1" style="min-width:0">
   <div class="d-flex align-items-end flex-shrink-0" style="height:30px;background:#eff3fc;border-bottom:2px solid #c0c0c8;padding-left:3px"><div class="tab3d d-flex align-items-center justify-content-between"><svg width="20" height="21" viewBox="0 0 20 21"><path d="M1 6l4-5h14v13l-4 6H1z" fill="#7fae2e" stroke="#3e5218"/><path d="M1 6l4-5h14l-4 5z" fill="#b9db6a"/><rect x="1" y="6" width="14" height="14" fill="#c9d58a" stroke="#3e5218"/><text x="2" y="17" font-family="Liberation Sans,sans-serif" font-size="9" font-weight="bold" fill="#222">3D</text></svg><span class="pt-1">3D view 1</span><button class="shut" aria-label="Close view"><svg width="16" height="16"><path d="M4.500 4.500l7 7m0-7l-7 7" stroke="#fff" stroke-width="2.600"/></svg></button></div></div>
   <div class="viewport3d flex-grow-1">
    <svg width="1540" height="550" viewBox="380 238 1540 550" font-family="Liberation Mono,monospace" font-size="24">
     <defs><clipPath id="ball"><circle r="1"/></clipPath></defs>
     <path d="M1221 238v18" stroke="#0d2fd0" stroke-width="5"/><path d="M1217 256h9l-3 11h-3z" fill="#05108a"/>
     <path d="M1040 502L1054 506M1384 500L1516 539L1380 617" fill="none" stroke="#999" stroke-width="1.300" stroke-dasharray="7 4"/>
     <g transform="translate(1222 561) scale(175)"><g clip-path="url(#ball)"><circle r="1" fill="#3d2500"/><g id="shade" transform="rotate(-51)"></g></g></g>
     <path d="M1054 619L1274 685L1386 613" fill="none" stroke="#8d8678" stroke-width="1.300" stroke-dasharray="7 4"/>
     <path d="M1222 414V560" stroke="#ff3214" stroke-width="2" stroke-dasharray="7 3"/>
     <path d="M1222 560L1131 615" stroke="#2a20c8" stroke-width="1.500" stroke-dasharray="7 3"/>
     <path d="M1222 560L1350 598" stroke="#3cf000" stroke-width="1.500" stroke-dasharray="7 3"/>
     <text x="1200" y="404" fill="#f00">Z/N</text><text x="1096" y="632" fill="#00f">X/U</text><text x="1348" y="613" fill="#0f0">Y/V</text>
     <g><path d="M426 723Q438 727 443 742L428 751Q420 750 414 744Q416 728 426 723Z" fill="#c2c2c2"/><path d="M426 733Q433 736 434 744L427 748L420 744Q420 736 426 733" fill="#8a8a8a"/><path d="M426 741V722" stroke="#c81414" stroke-width="3"/><circle cx="426" cy="720" r="4" fill="#c00"/><path d="M426 741L413 748" stroke="#12129a" stroke-width="4"/><path d="M407 753l4-9 7 7z" fill="#0a0ab0"/><path d="M426 741L442 746" stroke="#109a18" stroke-width="3"/><path d="M440 741l9 7-7 4z" fill="#14a81c"/>
      <text x="425" y="715" fill="#f22">Z</text><text x="400" y="760" fill="#00f">X</text><text x="454" y="758" fill="#1f1">Y</text></g>
    </svg>
   </div>
   <div class="view-edge"></div>
   <div class="log-pane flex-shrink-0"><h6>Starting new project...</h6><p> </p><h6>Creating geometry...</h6><p>Created geometry: sphere</p><p> </p><h6>Modifying the solution...</h6><p>Set the frequency to</p></div>
  </section>
 </div>

 <footer class="status d-flex justify-content-end align-items-end flex-shrink-0">
  <div class="sec shut-r d-flex align-items-center justify-content-center" style="width:39px;margin-right:69px"><svg width="22" height="22" viewBox="0 0 22 22"><path d="M2 6h4q-1-4 2-5 3 1 2 5h4v4l3 1v3l-4-1v6H2v-5l3-1v-2L2 10z" fill="#8fbf3f" stroke="#3e5a18"/><circle cx="15.500" cy="15.500" r="6" fill="#fff" stroke="#c22"/><circle cx="15.500" cy="15.500" r="3.500" fill="#e02a22"/></svg></div>
  <div class="sec shut-r d-flex align-items-center" style="width:166px;margin-right:69px;padding-left:4px">Display:<button class="st-on d-flex align-items-center justify-content-center" aria-label="Solid"><svg width="20" height="22"><use href="#cubeg"/></svg></button><button style="margin-left:6px" aria-label="Mesh"><svg width="21" height="22" viewBox="0 0 20 22"><path d="M2 6L8 1L18 4L19 12L11 21L3 16Z" fill="#4590b4" stroke="#2b6080"/><path d="M2 6L11 8L18 4M11 8L11 21M8 1l3 7M3 16l8-8 8 4M7 7l-4 9M15 6l-4 15" fill="none" stroke="#b5deee"/></svg></button>:<button class="st-on ms-1 d-flex align-items-center justify-content-center" aria-label="Both"><svg width="20" height="22" viewBox="0 0 20 22"><path d="M2 6L8 1L18 4L19 12L11 21L3 16Z" fill="#86bf35" stroke="#2b6080"/><path d="M2 6L8 1L18 4L11 8L11 21L3 16Z" fill="#4a96b8"/><path d="M2 6L11 8L18 4M11 8L11 21M8 1l3 7M7 7l-4 9" fill="none" stroke="#d0ecf4"/></svg></button></div>
  <div class="sec shut-r d-flex align-items-center" style="width:114px;margin-right:69px;padding-left:4px">Tools:<button style="margin-left:5px" aria-label="Measure"><svg width="21" height="22" viewBox="0 0 21 22"><path d="M2 5l4-4 10 2 1 12-6 4-9-2z" fill="url(#gGrn)" stroke="#4c6d1d"/><circle cx="9" cy="10" r="3.600" fill="#c11"/><path d="M11 17l8 3v-3" fill="none" stroke="#d9b430" stroke-width="2"/></svg></button><button style="margin-left:9px" aria-label="Validate"><svg width="22" height="22" viewBox="0 0 22 22"><path d="M1 5Q11-1 20 6L11 20Z" fill="#c8e28c" stroke="#4c6d1d"/><path d="M6 8l5 6L20 2" fill="none" stroke="#8a2a1a" stroke-width="2"/></svg></button></div>
  <div class="sec shut-r d-flex align-items-center" style="width:252px;margin-right:69px;padding-left:4px"><span class="flex-shrink-0" style="width:86px">Selection:</span><button aria-label="Pointer"><svg width="13" height="20" viewBox="0 0 13 20"><path d="M1 1v15l4-4 3 7 2-1-3-7h5z" fill="#fff" stroke="#556"/></svg></button><svg width="8" height="4" style="margin:0 10px 0 13px"><path d="M0 0h8L4 4z"/></svg><button aria-label="Selection type"><svg width="20" height="22" viewBox="0 0 20 22"><path d="M1 8l7-6 11 3v11l-8 5-10-4z" fill="#7fb32a" stroke="#55701a"/><path d="M3 12l6-3 6 2v6l-6 3-6-2zM3 12l6 2 6-3M9 14v6" fill="none" stroke="#f0b418" stroke-width="1.800"/></svg></button><svg width="8" height="4" style="margin:0 10px 0 9px"><path d="M0 0h8L4 4z"/></svg><button aria-label="Selection list"><svg width="22" height="22" viewBox="0 0 22 22"><path d="M1 1h19v13H1z" fill="#8cc24a" stroke="#3e6418" stroke-width="1.500"/><path d="M1 5h19M1 9h19" stroke="#eef6d8"/><path d="M11 8v11l3-3 2 5 2-1-2-5h4z" fill="#fff" stroke="#556"/></svg></button><svg width="8" height="4" style="margin:0 10px 0 8px"><path d="M0 0h8L4 4z"/></svg><button aria-label="Box selection"><svg width="20" height="22" viewBox="0 0 20 22"><path d="M2 2h16v13H2z" fill="#a5cc5a" stroke="#2d7a90" stroke-width="1.500"/><path d="M0 0h4v4H0zM8 0h4v4H8zM16 0h4v4h-4zM0 7h4v4H0zM16 7h4v4h-4zM0 13h4v4H0z" fill="#2a90a8"/><path d="M10 7v11l3-3 2 5 2-1-2-5h4z" fill="#fff" stroke="#556"/></svg></button></div>
  <div class="sec d-flex align-items-center" style="width:62px;padding-left:6px;color:#555">Unit: m</div>
 </footer>

 <form class="dlg position-absolute" role="dialog" aria-label="Add plane wave source">
  <div class="dlg-title d-flex align-items-center ui-face"><svg width="18" height="17"><use href="#logo"/></svg><span>Add plane wave source</span><button type="button" class="ms-auto" aria-label="Close dialog"><svg width="13" height="13"><path d="M.500.500l12 12m0-12l-12 12" stroke="#111"/></svg></button></div>
  <div class="dlg-body">
   <div class="d-flex align-items-end" role="tablist"><button type="button" class="dtab on">Source</button><button type="button" class="dtab">Workplane</button></div>
   <div class="dpanel d-flex flex-column gap8">
    <div class="d-flex justify-content-between align-items-center"><label for="mag">Magnitude (V/m)</label><input id="mag" class="fk half" value="1"></div>
    <div class="d-flex justify-content-between align-items-center"><label for="pha">Phase (degrees)</label><input id="pha" class="fk half" value="0"></div>
    <div class="boxed d-flex align-items-center" style="height:43px;padding-left:11px"><input class="rb" type="radio" name="inc" id="r1" checked><label for="r1" style="margin-left:6px">Single incident wave</label><input class="rb" type="radio" name="inc" id="r2" style="margin-left:12px"><label for="r2" style="margin-left:6px">Loop over multiple directions</label></div>
    <div class="d-flex justify-content-between">
     <fieldset class="grp half"><legend>Direction</legend><div class="d-flex flex-column gap7">
      <div class="d-flex"><label class="sym" for="d1">θ</label><input id="d1" class="fk flex-grow-1" value="0.0"><button type="button" class="lockb" aria-label="Lock"><svg width="18" height="20"><use href="#lock"/></svg></button></div>
      <div class="d-flex"><label class="sym" for="d2">ϕ</label><input id="d2" class="fk flex-grow-1" value="0.0"><button type="button" class="lockb" aria-label="Lock"><svg width="18" height="20"><use href="#lock"/></svg></button></div></div></fieldset>
     <fieldset class="grp half"><legend>End</legend><div class="d-flex flex-column gap7">
      <div class="d-flex"><label class="sym dim" for="e1">θ</label><input id="e1" class="fk flex-grow-1" value="0.0" disabled><button type="button" class="lockb" disabled aria-label="Lock"><svg width="18" height="20"><use href="#lockoff"/></svg></button></div>
      <div class="d-flex"><label class="sym dim" for="e2">ϕ</label><input id="e2" class="fk flex-grow-1" value="0.0" disabled><button type="button" class="lockb" disabled aria-label="Lock"><svg width="18" height="20"><use href="#lockoff"/></svg></button></div></div></fieldset>
    </div>
    <div class="d-flex justify-content-between">
     <fieldset class="grp half"><legend>Increment</legend><div class="d-flex flex-column gap7">
      <div class="d-flex"><label class="sym dim" for="i1">θ</label><input id="i1" class="fk flex-grow-1" value="0.0" disabled><button type="button" class="lockb" disabled aria-label="Lock"><svg width="18" height="20"><use href="#lockoff"/></svg></button></div>
      <div class="d-flex"><label class="sym dim" for="i2">ϕ</label><input id="i2" class="fk flex-grow-1" value="0.0" disabled><button type="button" class="lockb" disabled aria-label="Lock"><svg width="18" height="20"><use href="#lockoff"/></svg></button></div></div></fieldset>
     <fieldset class="grp half"><legend>Number of directions</legend><div class="d-flex flex-column gap7">
      <div class="d-flex"><label class="sym dim" for="n1">θ</label><input id="n1" class="fk flex-grow-1" value="1.0" disabled></div>
      <div class="d-flex"><label class="sym dim" for="n2">ϕ</label><input id="n2" class="fk flex-grow-1" value="1.0" disabled></div></div></fieldset>
    </div>
    <div class="d-flex justify-content-between align-items-center"><label for="pol">Polarisation angle (degrees)</label><input id="pol" class="fk half" value="0.0"></div>
    <div class="d-flex justify-content-between align-items-start">
     <fieldset class="grp" style="width:340px;padding:11px 12px 12px 11px"><legend style="margin-left:-2px">Polarisation</legend>
      <div class="boxed d-flex flex-column" style="padding:13px 12px;gap:10px">
       <div class="d-flex align-items-center gap7"><input class="rb" type="radio" name="pl" id="p1"><label for="p1">Left hand rotating elliptical</label></div>
       <div class="d-flex align-items-center gap7"><input class="rb" type="radio" name="pl" id="p2" checked><label for="p2">Linear</label></div>
       <div class="d-flex align-items-center gap7"><input class="rb" type="radio" name="pl" id="p3"><label for="p3">Right hand rotating elliptical</label></div>
      </div>
      <div class="d-flex align-items-center gap-1" style="margin-top:10px"><input class="cb" type="checkbox" id="c1"><label for="c1">Calculate orthogonal polarisations</label></div>
     </fieldset>
     <svg width="120" height="167" viewBox="910 667 120 167" font-family="Liberation Sans,sans-serif" font-size="16" fill="none" stroke="#000" stroke-width="1.500">
      <path d="M996 677V798M937 705L983 683M937 705H984M937 705L966 750M996 798L915 813M937 827L996 798L1024 812"/>
      <path d="M966 750L996 798M937 705V827" stroke-dasharray="3 3"/>
      <path d="M969 691Q974 698 974 704M996 765Q984 765 980 769M951 808Q956 811 957 816M940 700l7 4-3 6M951 705l5 8-11 1M972 708h9M951 677l4-4 4 4M951 749l4-4 4 4"/>
      <g fill="#000" stroke="none"><path d="M996 674l4 5h-8zM986 681l-2 6-4-5zM987 705l-6 4v-8zM974 706l-4-6h8zM968 753l-7-3 6-4zM979 771l0-7 5 5zM912 813l6-4v7zM1028 814l-7 0 3-6zM958 818l-5-4 6-2z"/>
       <text x="941" y="692">-<tspan font-style="italic" font-family="Liberation Serif,serif" font-size="19">θ</tspan></text><text x="999" y="688">z</text><text x="976" y="698" font-size="18" font-family="Liberation Serif,serif">η</text><text x="972" y="724">E<tspan font-size="11" dy="3">o</tspan></text><text x="950" y="762">β<tspan font-size="11" dy="3">o</tspan></text><text x="980" y="761" font-style="italic" font-size="19" font-family="Liberation Serif,serif">θ</text><text x="918" y="826">x</text><text x="1010" y="819">y</text><text x="960" y="826" font-style="italic" font-size="18" font-family="Liberation Serif,serif">φ</text></g>
     </svg>
    </div>
    <div class="d-flex justify-content-between align-items-center" style="width:340px"><label for="ell" class="dim text-nowrap">Ellipticity (0 to 1)</label><input id="ell" class="fk" style="width:182px" value="0.0" disabled></div>
    <div class="d-flex align-items-center gap7"><label for="lab">Label</label><input id="lab" class="fk flex-grow-1" value="PlaneWaveSource1"></div>
   </div>
   <div class="d-flex justify-content-center" style="gap:9px;padding:11px 0 0 2px"><button type="button" class="dbtn prime">C<u>r</u>eate</button><button type="button" class="dbtn"><u>A</u>dd</button><button type="button" class="dbtn"><u>C</u>lose</button></div>
  </div>
 </form>
</main>
<div class="desk-side">t</div>
</div>
<script>
// Lambert bands: each isoline of constant light on the ball is an ellipse; the axis x points to the lamp.
const shade = document.getElementById('shade'), flat = 0.49, deep = 0.87, steps = 70;
for (let k = 0; k < steps; k++) {
  const c = k / steps, lum = Math.min(1, 0.24 + 0.8 * c), half = Math.sqrt(1 - c * c);
  const fill = `rgb(${Math.round(255 * lum)},${Math.round(153 * lum)},0)`;
  let s = `<ellipse cx="${c * flat}" cy="0" rx="${half * deep}" ry="${half}" fill="${fill}"/>`;
  if (c < flat) s += `<rect x="${c / flat}" y="-1" width="1" height="2" fill="${fill}"/>`;
  shade.insertAdjacentHTML('beforeend', s);
}
const mag = document.getElementById('mag');
mag.focus(); mag.select();
</script>
</body>
</html>
